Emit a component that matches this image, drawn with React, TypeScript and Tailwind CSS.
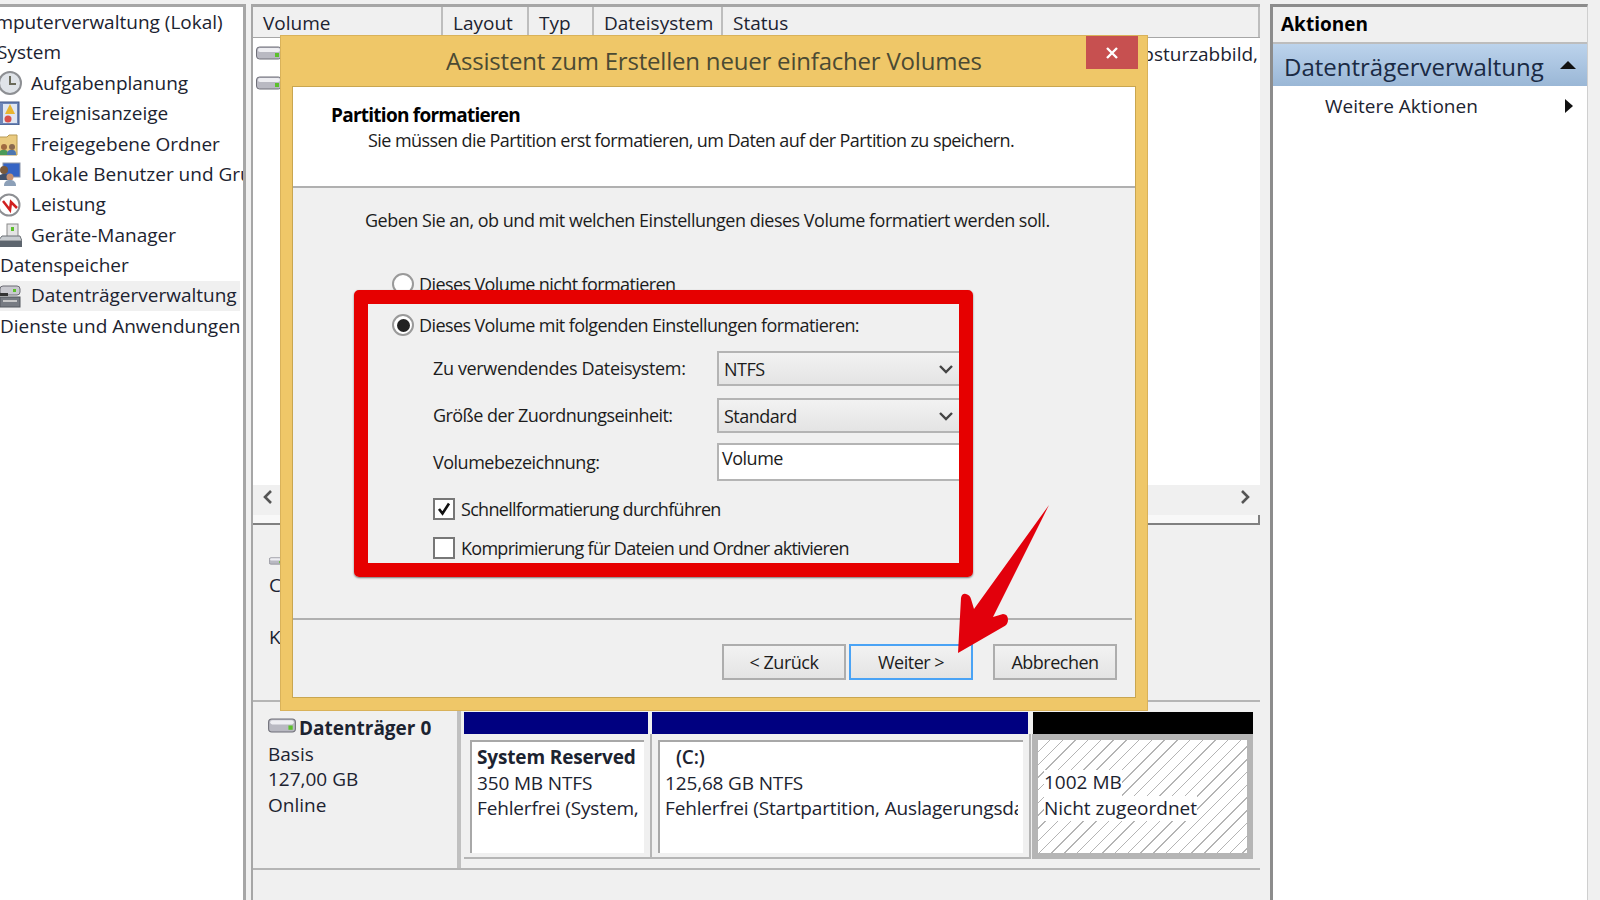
import React from "react";

const font = "font-['Open_Sans','Noto_Sans',sans-serif]";

const Disk = ({ className }: { className?: string }) => (
  <svg viewBox="0 0 26 14" className={className}>
    <rect x="0.5" y="1" width="25" height="12" rx="3" fill="#b9b9c2" stroke="#6f6f78" />
    <rect x="2" y="2" width="22" height="4" rx="2" fill="#eeeef2" />
    <rect x="19" y="7" width="4" height="4" fill="#5cc02c" />
  </svg>
);

const ClockIcon = () => (
  <svg viewBox="0 0 24 24" className="w-6 h-6">
    <circle cx="12" cy="12" r="11" fill="#dfe3e8" stroke="#8d8f93" strokeWidth="2" />
    <path d="M12 5v8h6" fill="none" stroke="#6a6a5a" strokeWidth="2" />
  </svg>
);

const EventIcon = () => (
  <svg viewBox="0 0 24 24" className="w-6 h-6">
    <rect x="1" y="1" width="20" height="23" fill="#6d86b8" stroke="#3f5585" />
    <rect x="5" y="3" width="14" height="19" fill="#dfe6f2" />
    <path d="M12 3l5 10H7z" fill="#e8b530" />
    <circle cx="10" cy="18" r="3.5" fill="#d8504a" />
  </svg>
);

const FolderIcon = () => (
  <svg viewBox="0 0 24 24" className="w-6 h-6">
    <path d="M1 5h8l2 -2h8v20H1z" fill="#eacb80" stroke="#b79a55" />
    <circle cx="6" cy="15" r="3" fill="#a06a40" />
    <path d="M1 23c0-5 2-5 5-5s4 1 4 5z" fill="#4c9a58" />
    <circle cx="14" cy="15" r="3" fill="#8a6a50" />
    <path d="M9 23c0-5 2-5 5-5s4 1 4 5z" fill="#4d76b0" />
  </svg>
);

const UsersIcon = () => (
  <svg viewBox="0 0 24 24" className="w-6 h-6">
    <rect x="5" y="1" width="17" height="14" fill="#3564c4" stroke="#8a94a8" />
    <circle cx="6" cy="8" r="4" fill="#7a5a3c" />
    <path d="M0 18c0-5 3-6 6-6s6 1 6 6z" fill="#40506a" />
    <circle cx="12" cy="15" r="3.5" fill="#c69070" />
    <path d="M6 24c0-5 3-6 6-6s6 1 6 6z" fill="#8ca0b8" />
  </svg>
);

const PerfIcon = () => (
  <svg viewBox="0 0 24 24" className="w-6 h-6">
    <circle cx="11" cy="12" r="10.5" fill="#fff" stroke="#8d8f93" strokeWidth="2" />
    <path d="M5 8l7 9 1-8 6 6" fill="none" stroke="#d02020" strokeWidth="2.5" />
  </svg>
);

const DeviceIcon = () => (
  <svg viewBox="0 0 24 24" className="w-6 h-6">
    <rect x="9" y="1" width="11" height="13" fill="#e4e4e4" stroke="#8a8a8a" />
    <rect x="13" y="4" width="3" height="4" fill="#5cc02c" />
    <path d="M4 13h18l2 5H0z" fill="#c8ccd0" stroke="#6c7076" />
    <rect x="0" y="18" width="24" height="6" fill="#5d656e" />
  </svg>
);

const VolumeIcon = () => (
  <svg viewBox="0 0 24 24" className="w-6 h-6">
    <rect x="2" y="2" width="20" height="9" rx="3" fill="#c9c9cf" stroke="#6d6d75" />
    <rect x="15" y="5" width="3" height="3" fill="#5cc02c" />
    <rect x="0" y="9" width="10" height="3" fill="#333" />
    <rect x="2" y="13" width="20" height="10" fill="#777b82" stroke="#55585e" />
    <rect x="5" y="16" width="14" height="2" fill="#c8c8c8" />
  </svg>
);

const treeRows: { label: string; icon?: React.ReactNode; selected?: boolean; shift?: string }[] = [
  { label: "Computerverwaltung (Lokal)", shift: "-ml-[28px]" },
  { label: "System", shift: "-ml-[3px]" },
  { label: "Aufgabenplanung", icon: <ClockIcon /> },
  { label: "Ereignisanzeige", icon: <EventIcon /> },
  { label: "Freigegebene Ordner", icon: <FolderIcon /> },
  { label: "Lokale Benutzer und Gruppen", icon: <UsersIcon /> },
  { label: "Leistung", icon: <PerfIcon /> },
  { label: "Geräte-Manager", icon: <DeviceIcon /> },
  { label: "Datenspeicher" },
  { label: "Datenträgerverwaltung", icon: <VolumeIcon />, selected: true },
  { label: "Dienste und Anwendungen" },
];

const columns = [
  { label: "Volume", w: "w-[190px]" },
  { label: "Layout", w: "w-[86px]" },
  { label: "Typ", w: "w-[65px]" },
  { label: "Dateisystem", w: "w-[129px]" },
  { label: "Status", w: "flex-1" },
];

const Radio = ({ checked }: { checked?: boolean }) => (
  <span className="w-[22px] h-[22px] shrink-0 rounded-full border-2 border-[#9a9a9a] bg-white flex items-center justify-center">
    {checked && <span className="w-[13px] h-[13px] rounded-full bg-[#222]" />}
  </span>
);

const Check = ({ checked }: { checked?: boolean }) => (
  <span className="w-[22px] h-[22px] shrink-0 border-2 border-[#777] bg-white flex items-center justify-center">
    {checked && (
      <svg viewBox="0 0 16 16" className="w-4 h-4">
        <path d="M3 8l3.5 4.5L13 2.5" fill="none" stroke="#111" strokeWidth="2.6" />
      </svg>
    )}
  </span>
);

const Select = ({ value }: { value: string }) => (
  <div className="w-[248px] h-[35px] border-2 border-[#b4b4b4] bg-linear-to-b from-[#f2f2f2] to-[#e4e4e4] flex items-center pl-[5px]">
    {value}
    <svg viewBox="0 0 14 10" className="w-[14px] h-[10px] ml-auto mr-[10px]">
      <path d="M1 2l6 6 6-6" fill="none" stroke="#444" strokeWidth="2.4" />
    </svg>
  </div>
);

const WizardButton = ({ label, active }: { label: string; active?: boolean }) => (
  <div className={`w-[124px] h-[36px] border-2 bg-linear-to-b from-[#f2f2f2] to-[#e4e4e4] flex items-center justify-center ${active ? "border-[#4aa3f5]" : "border-[#adadad]"}`}>
    {label}
  </div>
);

const Dialog = () => (
  <div className="absolute left-[280px] top-[35px] w-[868px] h-[676px] bg-[#efc768] border border-[#d9b25a] flex flex-col text-[#1c1c1c] text-[18px] leading-6 tracking-[-0.5px]">
    <div className="h-[50px] shrink-0 flex items-center pl-[165px] text-[#4b4a33] text-[24px] tracking-[-0.2px]">
      Assistent zum Erstellen neuer einfacher Volumes
    </div>
    <div className="absolute left-[805px] top-0 w-[52px] h-[33px] bg-[#c75050] flex items-center justify-center">
      <svg viewBox="0 0 14 14" className="w-[14px] h-[14px]">
        <path d="M2 2l10 10M12 2L2 12" stroke="#fff" strokeWidth="2.4" />
      </svg>
    </div>
    <div className="mx-[11px] mb-[12px] flex-1 flex flex-col bg-[#f0f0f0] border border-[#c9a650]">
      <div className="h-[101px] shrink-0 bg-white border-b-2 border-[#b0b0b0] pl-[38px] pt-[16px]">
        <div className="font-bold text-black text-[19px] tracking-[-0.75px]">Partition formatieren</div>
        <div className="ml-[37px] mt-[1px] tracking-[-0.58px]">Sie müssen die Partition erst formatieren, um Daten auf der Partition zu speichern.</div>
      </div>
      <div className="flex-1 flex flex-col pl-[72px] pt-[20px]">
        <div className="tracking-[-0.49px]">Geben Sie an, ob und mit welchen Einstellungen dieses Volume formatiert werden soll.</div>
        <div className="ml-[27px] mt-[40px] flex items-center gap-[5px] tracking-[-0.6px]">
          <Radio />
          Dieses Volume nicht formatieren
        </div>
        <div className="ml-[27px] mt-[17px] flex items-center gap-[5px] tracking-[-0.6px]">
          <Radio checked />
          Dieses Volume mit folgenden Einstellungen formatieren:
        </div>
        <div className="ml-[68px] flex flex-col">
          <div className="mt-[14px] flex items-center">
            <span className="w-[284px] tracking-[-0.35px] -mt-[2px]">Zu verwendendes Dateisystem:</span>
            <Select value="NTFS" />
          </div>
          <div className="mt-[12px] flex items-center">
            <span className="w-[284px] tracking-[-0.55px] -mt-[2px]">Größe der Zuordnungseinheit:</span>
            <Select value="Standard" />
          </div>
          <div className="mt-[10px] flex items-center">
            <span className="w-[284px]">Volumebezeichnung:</span>
            <div className="w-[248px] h-[38px] border-2 border-[#b4b4b4] bg-white pl-[3px] pt-[1px]">Volume</div>
          </div>
          <div className="mt-[16px] flex items-center gap-[6px] tracking-[-0.7px]">
            <Check checked />
            Schnellformatierung durchführen
          </div>
          <div className="mt-[15px] flex items-center gap-[6px] tracking-[-0.72px]">
            <Check />
            Komprimierung für Dateien und Ordner aktivieren
          </div>
        </div>
      </div>
      <div className="h-[79px] shrink-0 mr-[3px] border-t-2 border-[#b0b0b0] flex justify-end pt-[24px] pr-[15px]">
        <WizardButton label="< Zurück" />
        <span className="w-[3px]" />
        <WizardButton label="Weiter >" active />
        <span className="w-[20px]" />
        <WizardButton label="Abbrechen" />
      </div>
    </div>
  </div>
);

const Partition = ({ title, size, status, titleBold, className, indent }: { title: string; size: string; status: string; titleBold?: boolean; className: string; indent?: string }) => (
  <div className={`h-[125px] bg-[#f0f0f0] border-r-2 border-b-2 border-[#b5b5b5] p-[6px] pb-[4px] ${className}`}>
    <div className="h-full bg-white border-t-2 border-l-2 border-[#a8a8a8] pl-[5px] pr-[5px] pt-[3px] leading-[25.5px]">
      <div className="h-full overflow-hidden whitespace-nowrap tracking-[-0.15px]">
        <div className={`${titleBold ? "font-bold" : "font-semibold"} ${indent ?? ""}`}>{title}</div>
        <div>{size}</div>
        <div>{status}</div>
      </div>
    </div>
  </div>
);

export default function App() {
  return (
    <div className={`relative w-[1600px] h-[900px] overflow-hidden bg-[#f0f0f0] flex pt-[4px] text-[#1c2330] text-[19px] ${font}`}>
      <aside className="w-[246px] h-full shrink-0 bg-white border-t-[3px] border-r-[3px] border-[#a6a6a6] overflow-hidden whitespace-nowrap">
        {treeRows.map((row) => (
          <div key={row.label} className={`h-[30.4px] flex items-center overflow-hidden ${row.selected ? "bg-[#f0f0f0] mr-[3px]" : ""} ${row.shift ?? ""}`}>
            {row.icon && <span className="w-[33px] shrink-0 -ml-[2px] flex">{row.icon}</span>}
            {row.label}
          </div>
        ))}
      </aside>

      <main className="ml-[5px] w-[1009px] h-full shrink-0 flex flex-col border-t-[3px] border-l-2 border-[#a6a6a6] whitespace-nowrap">
        <div className="h-[31px] shrink-0 flex border-b border-[#a6a6a6]">
          {columns.map((col) => (
            <div key={col.label} className={`${col.w} pl-[10px] pt-[2px] border-r-2 border-[#bdbdbd] flex items-center`}>
              {col.label}
            </div>
          ))}
        </div>
        <div className="h-[447px] shrink-0 bg-white flex flex-col relative pt-[8px] pl-[3px] gap-[16px]">
          <Disk className="w-[26px] h-[14px]" />
          <Disk className="w-[26px] h-[14px]" />
          <span className="absolute top-[2px] right-[2px]">Absturzabbild,</span>
        </div>
        <div className="h-[30px] shrink-0 flex items-center justify-between px-[10px] pb-[6px] text-[#444]">
          <svg viewBox="0 0 10 14" className="w-[10px] h-[14px]"><path d="M8 1L2 7l6 6" fill="none" stroke="#555" strokeWidth="2.6" /></svg>
          <svg viewBox="0 0 10 14" className="w-[10px] h-[14px]"><path d="M2 1l6 6-6 6" fill="none" stroke="#555" strokeWidth="2.6" /></svg>
        </div>
        <div className="h-[8px] shrink-0 bg-[#f8f8f8] border-r-2 border-[#808080]" />
        <div className="h-[177px] shrink-0 border-t-2 border-[#808080] pl-[16px] pt-[29px]">
          <Disk className="w-[14px] h-[14px]" />
          <div className="mt-[3px]">C</div>
          <div className="mt-[23px]">K</div>
        </div>
        <div className="h-[170px] shrink-0 border-t-2 border-b-2 border-[#b5b5b5] flex">
          <div className="w-[208px] shrink-0 border-r-4 border-[#c0c0c0] pl-[15px] pt-[14px] leading-[25.5px]">
            <div className="flex items-center font-bold">
              <Disk className="w-[28px] h-[15px] mr-[3px] -mt-[6px]" />
              Datenträger 0
            </div>
            <div>Basis</div>
            <div>127,00 GB</div>
            <div>Online</div>
          </div>
          <div className="flex-1 flex flex-col pl-[3px] pt-[10px] pr-[7px]">
            <div className="flex gap-[4px] h-[22px] shrink-0">
              <span className="w-[184px] bg-[#000080]" />
              <span className="w-[376px] bg-[#000080]" />
              <span className="ml-[1px] flex-1 bg-black" />
            </div>
            <div className="flex">
              <Partition className="w-[188px]" title="System Reserved" titleBold size="350 MB NTFS" status="Fehlerfrei (System," />
              <Partition className="w-[379px]" title="(C:)" indent="ml-[11px]" size="125,68 GB NTFS" status="Fehlerfrei (Startpartition, Auslagerungsdatei" />
              <div className="ml-[1px] flex-1 h-[125px] border-[6px] border-[#b5b5b5] bg-[repeating-linear-gradient(135deg,#fff_0,#fff_8px,#b4b4b4_8px,#b4b4b4_9px)] pt-[30px] pl-[6px] leading-[25.5px]">
                <div className="bg-white w-fit">1002 MB</div>
                <div className="bg-white w-fit">Nicht zugeordnet</div>
              </div>
            </div>
          </div>
        </div>
      </main>

      <aside className="ml-[10px] w-[318px] h-full shrink-0 bg-white border-t-[3px] border-l-[3px] border-r border-l-[#8c8c8c] border-t-[#8c8c8c] border-r-[#cfcfcf] whitespace-nowrap flex flex-col">
        <div className="h-[37px] shrink-0 bg-[#f0f0f0] border-b-2 border-[#bdbdbd] pl-[8px] flex items-center font-bold text-black">Aktionen</div>
        <div className="h-[42px] shrink-0 bg-linear-to-b from-[#bcd3ec] to-[#9ab7d6] pl-[11px] pr-[11px] pt-[3px] flex items-center justify-between text-[24px] text-[#1a2a44]">
          Datenträgerverwaltung
          <svg viewBox="0 0 16 8" className="w-4 h-2 -mt-[3px]"><path d="M8 0l8 8H0z" fill="#111" /></svg>
        </div>
        <div className="h-[40px] shrink-0 pl-[52px] pr-[14px] flex items-center justify-between">
          Weitere Aktionen
          <svg viewBox="0 0 8 14" className="w-2 h-[14px]"><path d="M0 0l8 7-8 7z" fill="#111" /></svg>
        </div>
      </aside>

      <Dialog />

      <div className="absolute left-[354px] top-[290px] w-[619px] h-[287px] rounded-[5px] border-[14px] border-[#e60000] shadow-[0_1px_2px_rgba(0,0,0,0.5)]" />

      <svg viewBox="0 0 100 160" className="absolute left-[950px] top-[500px] w-[100px] h-[160px]">
        <path
          d="M8 153 L11 98 Q12 93 16 94 Q20 95 21 99 L24 109 L99 5 L43 117 L53 114 Q58 114 58 120 Q58 125 53 127 Z"
          fill="#e2000c"
        />
      </svg>
    </div>
  );
}
